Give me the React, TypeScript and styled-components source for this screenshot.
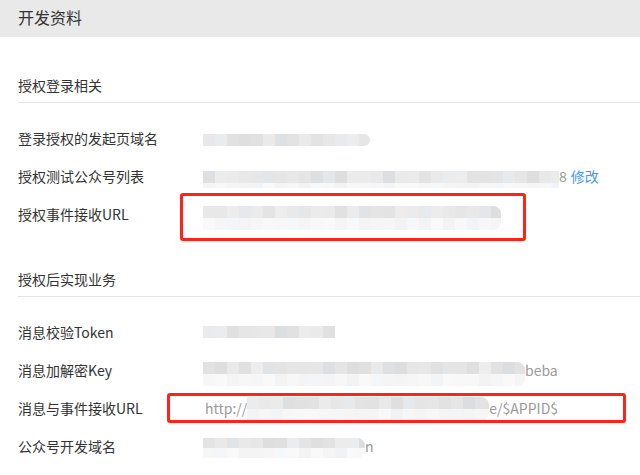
import React from 'react';
import styled, { createGlobalStyle } from 'styled-components';

const Global = createGlobalStyle`
  html, body { margin: 0; padding: 0; background: #fff; }
  body {
    font-family: "Microsoft YaHei", "Noto Sans CJK SC", "Noto Sans", sans-serif;
    color: #333;
    width: 640px;
    height: 475px;
    overflow: hidden;
  }
`;

const Page = styled.div`
  width: 640px;
  padding-top: 2px;
`;

const Header = styled.div`
  height: 37px;
  box-sizing: border-box;
  background: #e9e9e9;
  padding: 0 0 3px 18px;
  display: flex;
  align-items: center;
  font-size: 16px;
  color: #333;
  margin-top: -2px;
  margin-bottom: 2px;
`;

const Section = styled.section`
  padding-top: 36px;
`;

const SectionTitle = styled.h3`
  margin: 0 0 0 18px;
  font-size: 14px;
  font-weight: normal;
  line-height: 20px;
  padding-bottom: 7px;
  border-bottom: 1px solid #e4e4e8;
  color: #333;
`;

const Rows = styled.div`
  padding-top: 16px;
`;

const Row = styled.div`
  position: relative;
  height: 38px;
  display: flex;
  align-items: center;
  padding-left: 18px;
  font-size: 14px;
`;

const Label = styled.div`
  width: 185px;
  flex-shrink: 0;
  color: #333;
  white-space: nowrap;
`;

const Value = styled.div`
  display: flex;
  align-items: center;
  height: 100%;
  color: #999;
  white-space: nowrap;
`;

const Plain = styled.span<{ $gap?: number }>`
  color: #9a9a9a;
  margin-left: ${(p) => p.$gap ?? 0}px;
`;

const Link = styled.a`
  color: #459ae9;
  text-decoration: none;
  margin-left: 4px;
  cursor: pointer;
`;

const MosaicBox = styled.div<{ $w: number; $top: number; $round?: boolean }>`
  align-self: flex-start;
  margin-top: ${(p) => p.$top}px;
  width: ${(p) => p.$w}px;
  overflow: hidden;
  display: flex;
  flex-direction: column;
  border-radius: ${(p) => (p.$round ? '0 8px 8px 0' : '0')};
`;

const MosaicRow = styled.div`
  display: flex;
`;

const Tile = styled.span<{ $c: string; $h: number }>`
  flex-shrink: 0;
  width: 12px;
  height: ${(p) => p.$h}px;
  background: ${(p) => p.$c};
`;

const Annotation = styled.div<{ $l: number; $t: number; $w: number; $h: number }>`
  position: absolute;
  left: ${(p) => p.$l}px;
  top: ${(p) => p.$t}px;
  width: ${(p) => p.$w}px;
  height: ${(p) => p.$h}px;
  box-sizing: border-box;
  border: 3px solid #ff2318;
  border-radius: 3px;
  pointer-events: none;
`;

function tones(seed: number, n: number, lo: number, hi: number): string[] {
  let s = seed;
  const out: string[] = [];
  for (let i = 0; i < n; i++) {
    s = (s * 9301 + 49297) % 233280;
    const v = lo + Math.floor((s / 233280) * (hi - lo));
    const tint = s % 5 === 0 ? 3 : 0;
    out.push(`rgb(${v - tint},${v},${v + tint})`);
  }
  return out;
}

function Mosaic({
  width,
  top,
  seed,
  heights,
  round,
}: {
  width: number;
  top: number;
  seed: number;
  heights: number[];
  round?: boolean;
}) {
  const n = Math.ceil(width / 12);
  return (
    <MosaicBox $w={width} $top={top} $round={round}>
      {heights.map((h, r) => {
        const cs = r === 0 ? tones(seed, n, 222, 238) : tones(seed + 7 * r, n, 243, 250);
        return (
          <MosaicRow key={r}>
            {cs.map((c, i) => (
              <Tile key={i} $c={c} $h={h} />
            ))}
          </MosaicRow>
        );
      })}
    </MosaicBox>
  );
}

export default function App() {
  return (
    <Page>
      <Global />
      <Header>开发资料</Header>

      <Section>
        <SectionTitle>授权登录相关</SectionTitle>
        <Rows>
          <Row>
            <Label>登录授权的发起页域名</Label>
            <Value>
              <Mosaic width={167} top={15} seed={11} heights={[12]} round />
            </Value>
          </Row>
          <Row>
            <Label>授权测试公众号列表</Label>
            <Value>
              <Mosaic width={356} top={14} seed={23} heights={[12, 5]} />
              <Plain>8</Plain>
              <Link>修改</Link>
            </Value>
          </Row>
          <Row>
            <Label>授权事件接收URL</Label>
            <Value>
              <Mosaic width={298} top={11} seed={37} heights={[12, 12]} round />
            </Value>
            <Annotation $l={180} $t={-2} $w={346} $h={48} />
          </Row>
        </Rows>
      </Section>

      <Section>
        <SectionTitle>授权后实现业务</SectionTitle>
        <Rows>
          <Row>
            <Label>消息校验Token</Label>
            <Value>
              <Mosaic width={132} top={13} seed={41} heights={[12]} />
            </Value>
          </Row>
          <Row>
            <Label>消息加解密Key</Label>
            <Value>
              <Mosaic width={322} top={11} seed={53} heights={[12, 12]} round />
              <Plain>beba</Plain>
            </Value>
          </Row>
          <Row>
            <Label>消息与事件接收URL</Label>
            <Value>
              <Plain $gap={2}>http://</Plain>
              <Mosaic width={242} top={8} seed={67} heights={[12, 12]} round />
              <Plain>e/$APPID$</Plain>
            </Value>
            <Annotation $l={167} $t={4} $w={459} $h={30} />
          </Row>
          <Row>
            <Label>公众号开发域名</Label>
            <Value>
              <Mosaic width={162} top={11} seed={79} heights={[10, 10]} round />
              <Plain>n</Plain>
            </Value>
          </Row>
        </Rows>
      </Section>
    </Page>
  );
}
